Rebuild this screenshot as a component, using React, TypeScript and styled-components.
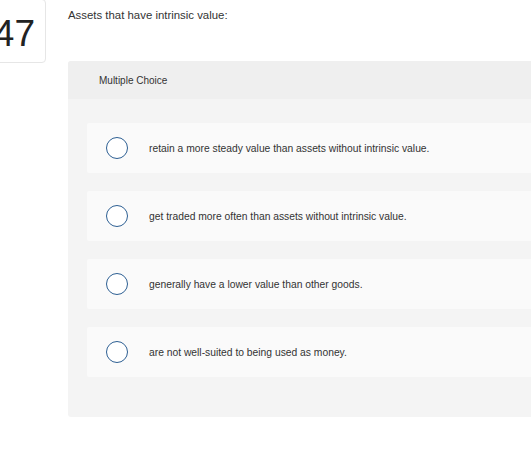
import styled, { createGlobalStyle } from 'styled-components'

const GlobalStyle = createGlobalStyle`
  html, body {
    margin: 0;
    padding: 0;
    background: #ffffff;
    overflow: hidden;
  }
  body {
    font-family: 'Liberation Sans', Arial, sans-serif;
    color: #333333;
  }
`

const options = [
  'retain a more steady value than assets without intrinsic value.',
  'get traded more often than assets without intrinsic value.',
  'generally have a lower value than other goods.',
  'are not well-suited to being used as money.',
]

const App: React.FC = () => {
  return (
    <>
      <GlobalStyle />
      <Page>
        <NumberBox>47</NumberBox>
        <Content>
          <Question>Assets that have intrinsic value:</Question>
          <Panel>
            <PanelHeader>Multiple Choice</PanelHeader>
            <PanelBody>
              {options.map((text) => (
                <Option key={text}>
                  <Radio />
                  <OptionText>{text}</OptionText>
                </Option>
              ))}
            </PanelBody>
          </Panel>
        </Content>
      </Page>
    </>
  )
}

const Page = styled.div`
  display: flex;
  align-items: flex-start;
  width: 531px;
  height: 472px;
  overflow: hidden;
`

const NumberBox = styled.div`
  flex: none;
  box-sizing: border-box;
  width: 57px;
  height: 64px;
  margin: -1px 0 0 -11px;
  border: 1px solid #e6e6e6;
  border-radius: 4px;
  display: flex;
  align-items: center;
  justify-content: flex-end;
  padding: 5px 10px 0 0;
  font-family: 'Liberation Sans', Arial, sans-serif;
  font-weight: 400;
  font-size: 37px;
  color: #222222;
`

const Content = styled.div`
  flex: none;
  margin-left: 22px;
  width: 520px;
`

const Question = styled.p`
  margin: 0;
  padding-top: 9px;
  height: 61px;
  box-sizing: border-box;
  font-size: 11.4px;
  line-height: 13px;
  color: #333333;
`

const Panel = styled.div`
  background: #f4f4f4;
  border-radius: 3px;
  overflow: hidden;
`

const PanelHeader = styled.div`
  height: 38px;
  display: flex;
  align-items: center;
  padding-left: 31px;
  background: #efefef;
  font-size: 10px;
  color: #333333;
`

const PanelBody = styled.div`
  display: flex;
  flex-direction: column;
  gap: 18px;
  padding: 24px 0 40px 19px;
`

const Option = styled.div`
  height: 50px;
  display: flex;
  align-items: center;
  background: #fafafa;
  border-radius: 2px;
  padding-left: 19px;
`

const Radio = styled.span`
  flex: none;
  box-sizing: border-box;
  width: 22px;
  height: 22px;
  border: 1.5px solid #2d5f93;
  border-radius: 50%;
  background: #ffffff;
`

const OptionText = styled.span`
  margin-left: 21px;
  font-size: 10.3px;
  color: #333333;
`

export default App
